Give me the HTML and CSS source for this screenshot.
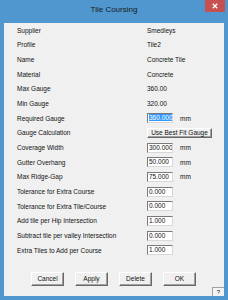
FILE: index.html
```html
<!DOCTYPE html>
<html lang="en">
<head>
    <meta charset="UTF-8">
    <meta name="viewport" content="width=device-width, initial-scale=1.0">
    <title>Tile Coursing</title>
    <link rel="stylesheet" href="styles.css">
</head>
<body>
    <div class="window">
        <div class="titlebar">
            <span></span>
            <span class="title">Tile Coursing</span>
            <span class="close-wrap">
                <span class="close">
                    <svg width="6" height="6" viewBox="0 0 6 6"><path d="M0.8 0.8 L5.2 5.2 M5.2 0.8 L0.8 5.2" stroke="#fff" stroke-width="1.3"/></svg>
                </span>
            </span>
        </div>
        <div class="client">
            <div class="row"><span class="label">Supplier</span><span class="value">Smedleys</span></div>
            <div class="row"><span class="label">Profile</span><span class="value">Tile2</span></div>
            <div class="row"><span class="label">Name</span><span class="value">Concrete Tile</span></div>
            <div class="row"><span class="label">Material</span><span class="value">Concrete</span></div>
            <div class="row"><span class="label">Max Gauge</span><span class="value">360.00</span></div>
            <div class="row"><span class="label">Min Gauge</span><span class="value">320.00</span></div>
            <div class="row"><span class="label">Required Gauge</span><span class="edit"><span class="selected">360.000</span></span><span class="unit">mm</span></div>
            <div class="row"><span class="label">Gauge Calculation</span><span class="button wide">Use Best Fit Gauge</span></div>
            <div class="row"><span class="label">Coverage Width</span><span class="edit">300.000</span><span class="unit">mm</span></div>
            <div class="row"><span class="label">Gutter Overhang</span><span class="edit">50.000</span><span class="unit">mm</span></div>
            <div class="row"><span class="label">Max Ridge-Gap</span><span class="edit">75.000</span><span class="unit">mm</span></div>
            <div class="row"><span class="label">Tolerance for Extra Course</span><span class="edit">0.000</span></div>
            <div class="row"><span class="label">Tolerance for Extra Tile/Course</span><span class="edit">0.000</span></div>
            <div class="row"><span class="label">Add tile per Hip Intersection</span><span class="edit">1.000</span></div>
            <div class="row"><span class="label">Subtract tile per valley Intersection</span><span class="edit">0.000</span></div>
            <div class="row"><span class="label">Extra Tiles to Add per Course</span><span class="edit">1.000</span></div>

            <div class="actions">
                <span class="button">Cancel</span>
                <span class="button">Apply</span>
                <span class="button">Delete</span>
                <span class="button">OK</span>
            </div>
            <div class="status">
                <span class="help">?</span>
            </div>
        </div>
    </div>
</body>
</html>
```

FILE: styles.css
```css
body {
    margin: 0;
    font-family: "Liberation Sans", Arial, sans-serif;
    font-size: 6.5px;
    color: #111;
}
.window {
    width: 228px;
    height: 300px;
    box-sizing: border-box;
    padding: 0 4px 4px 4px;
    background-color: #5097cf; /* window frame */
}
.titlebar {
    height: 23px;
    margin: 0 -4px;
    display: grid;
    grid-template-columns: 1fr auto 1fr;
    align-items: start;
}
.title {
    font-size: 8px;
    color: #1a1a1a;
    margin-top: 5px;
}
.close-wrap {
    display: flex;
    justify-content: flex-end;
}
.close {
    width: 20px;
    height: 12px;
    margin-right: 3px;
    background-color: #c75050;
    display: flex;
    align-items: center;
    justify-content: center;
}
.client {
    height: 273px;
    box-sizing: border-box;
    padding-left: 13px;
    background-color: #f0f0f0;
    display: flex;
    flex-direction: column;
}
.row {
    height: 14.67px;
    display: flex;
    align-items: center;
    flex-shrink: 0;
}
.label {
    width: 130px;
    flex-shrink: 0;
    white-space: nowrap;
}
.value {
    white-space: nowrap;
}
.edit {
    width: 26px;
    height: 10px;
    box-sizing: border-box;
    padding-left: 1px;
    background-color: #fff;
    border: 1px solid;
    border-color: #7a7a7a #d8d8d8 #d8d8d8 #7a7a7a;
    overflow: hidden;
    white-space: nowrap;
    line-height: 8px;
}
.selected {
    background-color: #3399ff;
    color: #fff;
}
.unit {
    margin-left: 7px;
}
.button {
    width: 33px;
    height: 14px;
    box-sizing: border-box;
    background-color: #f0f0f0;
    border: 1px solid;
    border-color: #fff #696969 #696969 #fff;
    box-shadow: inset -1px -1px 0 #a0a0a0;
    display: flex;
    align-items: center;
    justify-content: center;
    white-space: nowrap;
}
.button.wide {
    width: 65px;
    height: 10px;
}
.actions {
    display: flex;
    gap: 11px;
    margin-top: 14.33px;
    margin-left: 14px;
    flex-shrink: 0;
}
.status {
    display: flex;
    justify-content: flex-end;
    margin-top: 1px;
}
.help {
    width: 12px;
    height: 9px;
    box-sizing: border-box;
    border-top: 1px solid #a0a0a0;
    border-left: 1px solid #a0a0a0;
    background-color: #f4f4f4;
    display: flex;
    align-items: center;
    justify-content: center;
    font-size: 6px;
}
```
